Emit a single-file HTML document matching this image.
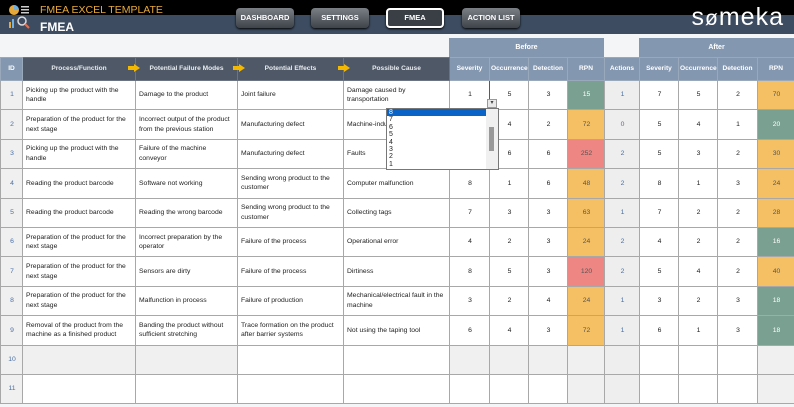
<!DOCTYPE html><html><head><meta charset="utf-8"><style>
*{margin:0;padding:0;box-sizing:border-box}
body{width:794px;height:407px;overflow:hidden;background:#f4f5f6;font-family:"Liberation Sans",Arial,sans-serif;position:relative}
.top{position:absolute;left:0;top:0;width:794px;height:15px;background:#000}
.bar{position:absolute;left:0;top:15px;width:794px;height:19px;background:#3d4c61}
.t1{position:absolute;left:40px;top:4px;color:#e8a93a;font-size:10.5px}
.t2{position:absolute;left:40px;top:20px;color:#fff;font-size:12px;font-weight:bold}
.btn{position:absolute;top:8px;height:20px;width:58px;border-radius:4px;background:linear-gradient(#7a7f86,#3e434a);color:#fff;font-size:7.5px;font-weight:bold;text-align:center;line-height:20px;box-shadow:0 1px 2px #000}
.logo{position:absolute;right:10px;top:3px;color:#fff;font-size:25px;letter-spacing:1px}
table{position:absolute;left:0;top:57px;width:794px;border-collapse:collapse;table-layout:fixed;font-size:6.8px}
td{border:1px solid #a8a8a8;height:29.4px;padding:0 2px 0 3px;background:#fff;color:#222;line-height:9.5px;overflow:hidden}
td.c{text-align:center}
tr.h td{height:23px;background:#4f5866;color:#e8ecf0;font-weight:bold;text-align:center;border-color:#6a7482;font-size:6.6px;padding:0 1px;white-space:nowrap}
tr.h td.b{background:#8497b0;color:#fff;border-color:#9aa8bc}
td.id{background:#f0f0f0;color:#4a6fa5;text-align:center}
td.a{background:#eeeeef;color:#4a6fa5;text-align:center}
td.g{background:#f0f0f0}
.gr{background:#7aa092!important;color:#fff!important}
.or{background:#f5c063!important;color:#555!important}
.rd{background:#ee8784!important;color:#555!important}
.grp{position:absolute;top:38px;height:19px;background:#8497b0;color:#fff;font-size:7px;font-weight:bold;text-align:center;line-height:19px}
.arr{position:absolute;top:64px;width:12px;height:8px}
</style></head><body>
<div class="top"></div><div class="bar"></div>
<svg style="position:absolute;left:8px;top:4px" width="26" height="26"><circle cx="6" cy="6" r="5" fill="#e8a93a"/><path d="M6 6 L6 1 A5 5 0 0 1 11 6Z" fill="#6fb0e0"/><rect x="13" y="2" width="8" height="1.5" fill="#ccc"/><rect x="13" y="5" width="8" height="1.5" fill="#ccc"/><rect x="13" y="8" width="8" height="1.5" fill="#ccc"/><rect x="1" y="18" width="2" height="6" fill="#e8a93a"/><rect x="4" y="15" width="2" height="9" fill="#6fb0e0"/><circle cx="14" cy="17" r="4" fill="none" stroke="#ddd" stroke-width="1.5"/><path d="M17 20 L21 24" stroke="#e07050" stroke-width="2"/></svg>
<div class="t1">FMEA EXCEL TEMPLATE</div><div class="t2">FMEA</div>
<div class="btn" style="left:236px">DASHBOARD</div>
<div class="btn" style="left:311px">SETTINGS</div>
<div class="btn" style="left:386px;background:#3a3f46;border:2px solid #fff;line-height:16px">FMEA</div>
<div class="btn" style="left:462px">ACTION LIST</div>
<div class="logo">s<span style="font-size:21px">ø</span>meka</div>
<div class="grp" style="left:449px;width:155px">Before</div>
<div class="grp" style="left:639px;width:155px">After</div>
<table>
<colgroup><col style="width:22px"><col style="width:113px"><col style="width:102px"><col style="width:106px"><col style="width:106px"><col style="width:40px"><col style="width:39px"><col style="width:39px"><col style="width:37px"><col style="width:35px"><col style="width:39px"><col style="width:39px"><col style="width:40px"><col style="width:37px"></colgroup>
<tr class="h"><td class="b">ID</td><td>Process/Function</td><td>Potential Failure Modes</td><td>Potential Effects</td><td>Possible Cause</td><td class="b">Severity</td><td class="b">Occurrence</td><td class="b">Detection</td><td class="b">RPN</td><td class="b">Actions</td><td class="b">Severity</td><td class="b">Occurrence</td><td class="b">Detection</td><td class="b">RPN</td></tr>
<tr><td class="id">1</td><td>Picking up the product with the handle</td><td>Damage to the product</td><td>Joint failure</td><td>Damage caused by transportation</td><td class="c" style="border:1.5px solid #2a7a3a">1</td><td class="c">5</td><td class="c">3</td><td class="c gr">15</td><td class="a">1</td><td class="c">7</td><td class="c">5</td><td class="c">2</td><td class="c or">70</td></tr>
<tr><td class="id">2</td><td>Preparation of the product for the next stage</td><td>Incorrect output of the product from the previous station</td><td>Manufacturing defect</td><td>Machine-induced</td><td class="c">8</td><td class="c">4</td><td class="c">2</td><td class="c or">72</td><td class="a">0</td><td class="c">5</td><td class="c">4</td><td class="c">1</td><td class="c gr">20</td></tr>
<tr><td class="id">3</td><td>Picking up the product with the handle</td><td>Failure of the machine conveyor</td><td>Manufacturing defect</td><td>Faults</td><td class="c">7</td><td class="c">6</td><td class="c">6</td><td class="c rd">252</td><td class="a">2</td><td class="c">5</td><td class="c">3</td><td class="c">2</td><td class="c or">30</td></tr>
<tr><td class="id">4</td><td>Reading the product barcode</td><td>Software not working</td><td>Sending wrong product to the customer</td><td>Computer malfunction</td><td class="c">8</td><td class="c">1</td><td class="c">6</td><td class="c or">48</td><td class="a">2</td><td class="c">8</td><td class="c">1</td><td class="c">3</td><td class="c or">24</td></tr>
<tr><td class="id">5</td><td>Reading the product barcode</td><td>Reading the wrong barcode</td><td>Sending wrong product to the customer</td><td>Collecting tags</td><td class="c">7</td><td class="c">3</td><td class="c">3</td><td class="c or">63</td><td class="a">1</td><td class="c">7</td><td class="c">2</td><td class="c">2</td><td class="c or">28</td></tr>
<tr><td class="id">6</td><td>Preparation of the product for the next stage</td><td>Incorrect preparation by the operator</td><td>Failure of the process</td><td>Operational error</td><td class="c">4</td><td class="c">2</td><td class="c">3</td><td class="c or">24</td><td class="a">2</td><td class="c">4</td><td class="c">2</td><td class="c">2</td><td class="c gr">16</td></tr>
<tr><td class="id">7</td><td>Preparation of the product for the next stage</td><td>Sensors are dirty</td><td>Failure of the process</td><td>Dirtiness</td><td class="c">8</td><td class="c">5</td><td class="c">3</td><td class="c rd">120</td><td class="a">2</td><td class="c">5</td><td class="c">4</td><td class="c">2</td><td class="c or">40</td></tr>
<tr><td class="id">8</td><td>Preparation of the product for the next stage</td><td>Malfunction in process</td><td>Failure of production</td><td>Mechanical/electrical fault in the machine</td><td class="c">3</td><td class="c">2</td><td class="c">4</td><td class="c or">24</td><td class="a">1</td><td class="c">3</td><td class="c">2</td><td class="c">3</td><td class="c gr">18</td></tr>
<tr><td class="id">9</td><td>Removal of the product from the machine as a finished product</td><td>Banding the product without sufficient stretching</td><td>Trace formation on the product after barrier systems</td><td>Not using the taping tool</td><td class="c">6</td><td class="c">4</td><td class="c">3</td><td class="c or">72</td><td class="a">1</td><td class="c">6</td><td class="c">1</td><td class="c">3</td><td class="c gr">18</td></tr>
<tr><td class="id">10</td><td class="g"></td><td class="g"></td><td></td><td></td><td class="g"></td><td class="g"></td><td class="g"></td><td class="g"></td><td class="a"></td><td></td><td></td><td></td><td class="g"></td></tr>
<tr><td class="id">11</td><td></td><td></td><td></td><td></td><td></td><td></td><td></td><td class="g"></td><td class="a"></td><td></td><td></td><td></td><td class="g"></td></tr>
</table>
<svg class="arr" style="left:128px" viewBox="0 0 12 8"><path d="M0 2H6V0L12 4L6 8V6H0Z" fill="#f5b800"/></svg>
<svg class="arr" style="left:233px" viewBox="0 0 12 8"><path d="M0 2H6V0L12 4L6 8V6H0Z" fill="#f5b800"/></svg>
<svg class="arr" style="left:338px" viewBox="0 0 12 8"><path d="M0 2H6V0L12 4L6 8V6H0Z" fill="#f5b800"/></svg>
<div style="position:absolute;left:487px;top:99px;width:10px;height:9px;background:#e8e8e8;border:1px solid #999;font-size:6px;text-align:center;line-height:7px;color:#444">▾</div>
<div style="position:absolute;left:386px;top:108px;width:113px;height:62px;background:#fff;border:1px solid #777;font-size:7px;line-height:7.4px;color:#222">
<div style="background:#0a64c8;color:#fff;width:99px;padding-left:2px">8</div>
<div style="padding-left:2px">7<br>6<br>5<br>4<br>3<br>2<br>1</div>
<div style="position:absolute;right:0;top:0;width:12px;height:60px;background:#f0f0f0"><div style="position:absolute;left:3px;top:18px;width:5px;height:24px;background:#999"></div></div>
</div>
</body></html>
